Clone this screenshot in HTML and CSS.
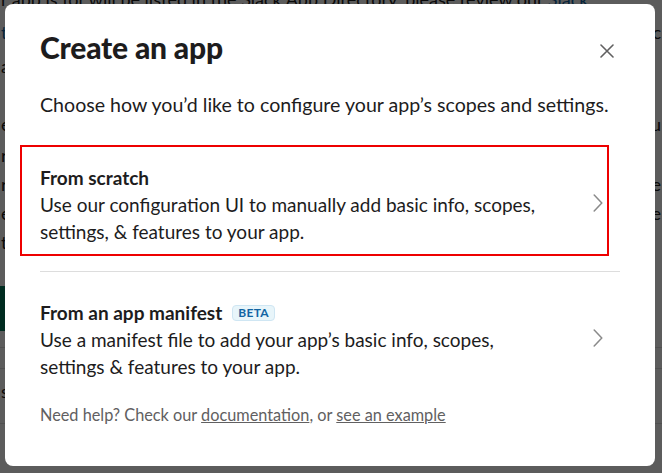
FILE: index.html
```html
<!DOCTYPE html>
<html lang="en">
<head>
<meta charset="utf-8">
<title>Create an app</title>
<link rel="stylesheet" href="styles.css">
</head>
<body>
<div class="page">
  <div class="bg-row r1"><span>r app is for will be listed in the Slack App Directory, please review our <span class="bg-link">Slack</span></span></div>
  <div class="bg-row r2"><span class="bg-link">t</span><span>c</span></div>
  <div class="bg-row r3"><span>a</span><span></span></div>
  <div class="bg-row r4"><span>e</span><span>u</span></div>
  <div class="bg-row r5"><span>r</span><span></span></div>
  <div class="bg-row r6"><span>r</span><span>e</span></div>
  <div class="bg-row r7"><span>e</span><span>e</span></div>
  <div class="bg-row r8"><span>t</span><span></span></div>
  <div class="bg-btn"></div>
  <div class="bg-rule first"></div>
  <div class="bg-rule"></div>
  <div class="bg-row r9"><span>s</span><span></span></div>
  <div class="bg-rule"></div>
</div>

<div class="overlay"></div>

<div class="modal" role="dialog" aria-labelledby="modal-title">
  <header class="modal-header">
    <h1 id="modal-title" class="modal-title">Create an app</h1>
    <button class="close-btn" aria-label="Close">
      <svg width="14" height="14" viewBox="0 0 14 14"><path d="M1 1L13 13M13 1L1 13" stroke="#616061" stroke-width="1.6" stroke-linecap="round" fill="none"/></svg>
    </button>
  </header>
  <p class="intro">Choose how you’d like to configure your app’s scopes and settings.</p>
  <ul class="options">
    <li class="option highlighted">
      <div class="option-text">
        <div class="option-title">From scratch</div>
        <div class="option-desc">Use our configuration UI to manually add basic info, scopes, settings, &amp; features to your app.</div>
      </div>
      <svg class="chevron" width="10" height="18" viewBox="0 0 10 18"><polyline points="1.2,1 8.8,9 1.2,17" stroke="#8a8a8a" stroke-width="1.5" fill="none" stroke-linejoin="round" stroke-linecap="round"/></svg>
    </li>
    <li class="option">
      <div class="option-text">
        <div class="option-title">From an app manifest <span class="badge">BETA</span></div>
        <div class="option-desc">Use a manifest file to add your app’s basic info, scopes, settings &amp; features to your app.</div>
      </div>
      <svg class="chevron" width="10" height="18" viewBox="0 0 10 18"><polyline points="1.2,1 8.8,9 1.2,17" stroke="#8a8a8a" stroke-width="1.5" fill="none" stroke-linejoin="round" stroke-linecap="round"/></svg>
    </li>
  </ul>
  <p class="help">Need help? Check our <a href="#">documentation</a>, or <a href="#">see an example</a></p>
</div>
</body>
</html>
```
FILE: styles.css
```css
html, body {
  margin: 0;
  padding: 0;
  height: 100%;
  overflow: hidden;
}

body {
  background: #ffffff;
  font-family: Lato, "Noto Sans", "Liberation Sans", sans-serif;
  color: #1d1c1d;
}

/* background page (dimmed by overlay) */
.page {
  font-size: 18px;
  line-height: 24px;
  color: #1d1c1d;
}

.bg-row {
  display: flex;
  justify-content: space-between;
  white-space: nowrap;
  height: 24px;
  padding: 0 1px;
}

.r1 { margin-top: -13px; height: 33px; }
.r2 { height: 30px; }
.r3 { height: 58px; margin-top: 4px; }
.r4 { height: 31px; }
.r5 { height: 29px; }
.r6 { height: 29px; }
.r7 { height: 29px; }
.r8 { height: 30px; }
.r9 { height: 24px; margin-top: 10px; }

.bg-link { color: #1264a3; }

.bg-btn {
  margin-top: 26px;
  width: 120px;
  height: 45px;
  background: #007a5a;
}

.bg-rule {
  margin-top: 20px;
  height: 1px;
  background: #dddddd;
}
.bg-rule.first { margin-top: 16px; }

.overlay {
  position: fixed;
  inset: 0;
  background: rgba(0, 0, 0, 0.64);
}

/* modal */
.modal {
  position: fixed;
  left: 5px;
  top: 4px;
  width: 650px;
  height: 462px;
  box-sizing: border-box;
  background: #ffffff;
  border-radius: 8px;
  padding: 25px 35px 0 35px;
}

.modal-header {
  display: flex;
  justify-content: space-between;
  align-items: flex-start;
}

.modal-title {
  margin: 0;
  font-size: 30px;
  line-height: 36px;
  font-weight: 900;
  color: #1d1c1d;
  letter-spacing: -0.2px;
}

.close-btn {
  margin: 15px 6px 0 0;
  padding: 0;
  border: 0;
  background: none;
  width: 14px;
  height: 14px;
  display: flex;
}

.intro {
  margin: 26px 0 0 0;
  font-size: 19.6px;
  line-height: 27px;
  color: #1d1c1d;
}

.options {
  list-style: none;
  margin: 25px 0 0 0;
  padding: 0;
}

.option {
  position: relative;
  display: flex;
  align-items: center;
  padding: 24px 0;
}

.option.highlighted {
  padding: 21px 0 26px 0;
}

.option + .option {
  border-top: 1px solid #dddddd;
  padding-top: 27px;
}

.option.highlighted::after {
  content: "";
  position: absolute;
  left: -20px;
  right: 11px;
  top: 2px;
  bottom: 15px;
  border: 2px solid #ee0000;
  pointer-events: none;
}

.option-text {
  width: 505px;
  font-size: 19px;
  line-height: 27px;
}

.option-title {
  font-weight: 700;
  display: flex;
  align-items: center;
  gap: 10px;
}

.option-desc {
  color: #1d1c1d;
}

.badge {
  display: inline-block;
  font-size: 12px;
  line-height: 14px;
  font-weight: 700;
  color: #1264a3;
  background: #e8f5fa;
  border: 1px solid #cfe6f3;
  border-radius: 4px;
  padding: 0 5px;
  letter-spacing: 0.3px;
}

.chevron {
  margin-left: auto;
  margin-right: 17px;
  margin-bottom: 3px;
}

.help {
  margin: 0;
  font-size: 16.3px;
  line-height: 22px;
  color: #616061;
}

.help a {
  color: #616061;
  text-decoration: underline;
}
```
